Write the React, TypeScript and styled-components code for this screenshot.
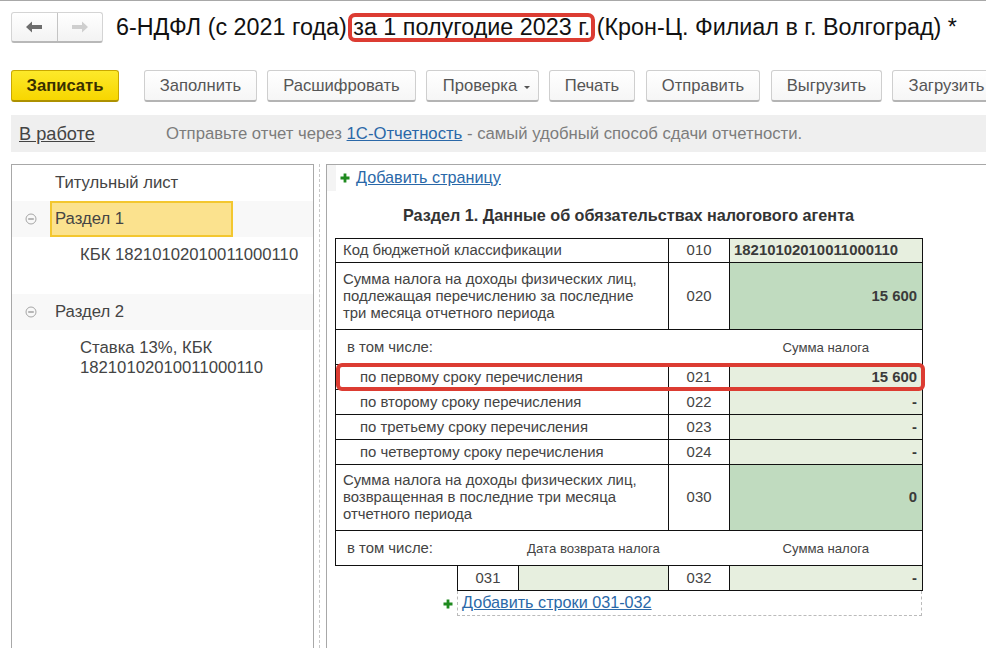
import styled, { createGlobalStyle } from 'styled-components';

const GlobalStyle = createGlobalStyle`
  html, body {
    margin: 0;
    padding: 0;
    background: #fff;
    font-family: "Liberation Sans", Arial, sans-serif;
    color: #333;
  }
`;

const Page = styled.div`
  width: 986px;
  height: 648px;
  overflow: hidden;
  border-top: 1px solid #a8a8a8;
  box-sizing: border-box;
  display: flex;
  flex-direction: column;
`;

const Header = styled.div`
  display: flex;
  align-items: center;
  height: 32px;
  margin-top: 10px;
  padding-left: 11px;
`;

const NavGroup = styled.div`
  display: flex;
  width: 92px;
  height: 31px;
  box-sizing: border-box;
  border: 1px solid #d4d4d4;
  border-bottom: 2px solid #b8b8b8;
  border-radius: 3px;
  background: linear-gradient(#fff, #f3f3f3);
  margin-right: 13px;
`;

const NavButton = styled.div<{ $split?: boolean }>`
  flex: 1;
  display: flex;
  align-items: center;
  justify-content: center;
  border-right: ${p => (p.$split ? '1px solid #c4c4c4' : 'none')};
`;

const Title = styled.h1`
  margin: 0;
  font-size: 23.33px;
  font-weight: 400;
  line-height: 30px;
  color: #111;
  white-space: nowrap;
`;

const Marked = styled.span`
  position: relative;

  &::after {
    content: '';
    position: absolute;
    left: -5px;
    right: -5px;
    top: -1px;
    bottom: -2px;
    border: 4px solid #dc3c32;
    border-radius: 7px;
  }
`;

const Toolbar = styled.div`
  display: flex;
  height: 32px;
  margin-top: 27px;
  padding-left: 11px;
  overflow: hidden;
`;

const Button = styled.div<{ $w: number; $gap: number; $primary?: boolean; $menu?: boolean }>`
  flex: 0 0 ${p => p.$w}px;
  height: 32px;
  box-sizing: border-box;
  margin-right: ${p => p.$gap}px;
  padding-left: ${p => (p.$menu ? '8px' : '0')};
  display: flex;
  align-items: center;
  justify-content: center;
  gap: 7px;
  border-radius: 3px;
  font-size: 16.6px;
  white-space: nowrap;
  border: 1px solid ${p => (p.$primary ? '#c9a800' : '#cfcfcf')};
  border-bottom: 2px solid ${p => (p.$primary ? '#ad9100' : '#b4b4b4')};
  background: ${p => (p.$primary ? 'linear-gradient(#fde92a, #f7d600)' : 'linear-gradient(#fff, #f6f6f6)')};
  color: ${p => (p.$primary ? '#3a3000' : '#555')};
  font-weight: ${p => (p.$primary ? 700 : 400)};
`;

const Caret = styled.span`
  width: 0;
  height: 0;
  margin-top: 3px;
  border-left: 3px solid transparent;
  border-right: 3px solid transparent;
  border-top: 3px solid #555;
`;

const InfoBar = styled.div`
  display: flex;
  align-items: center;
  height: 37px;
  box-sizing: border-box;
  margin: 13px 0 0 11px;
  padding: 1px 0 0 8px;
  background: #efefef;
  white-space: nowrap;
`;

const Status = styled.a`
  width: 147px;
  font-size: 18.2px;
  color: #444;
  text-decoration: underline;
`;

const Hint = styled.div`
  font-size: 16.7px;
  color: #7c7c7c;
`;

const Link = styled.a`
  color: #2a68a8;
  text-decoration: underline;
`;

const Body = styled.div`
  flex: 1;
  display: flex;
  margin: 12px 0 0 11px;
  min-height: 0;
`;

const Tree = styled.div`
  width: 303px;
  box-sizing: border-box;
  border: 1px solid #a8a8a8;
  border-bottom: none;
  font-size: 16.7px;
  color: #444;
`;

const TreeRow = styled.div<{ $group?: boolean; $h: number; $gap?: number }>`
  display: flex;
  align-items: center;
  height: ${p => p.$h}px;
  margin-bottom: ${p => p.$gap ?? 0}px;
  padding-left: 13px;
  background: ${p => (p.$group ? '#f8f8f8' : 'transparent')};
`;

const Toggle = styled.svg`
  flex: 0 0 12px;
  width: 12px;
  height: 12px;
`;

const TreeLabel = styled.div<{ $selected?: boolean }>`
  box-sizing: border-box;
  height: 36px;
  line-height: ${p => (p.$selected ? '32px' : '35px')};
  margin-left: ${p => (p.$selected ? '13px' : '18px')};
  width: ${p => (p.$selected ? '183px' : 'auto')};
  background: ${p => (p.$selected ? '#fbe28e' : 'transparent')};
  border: ${p => (p.$selected ? '2px solid #f3c72f' : 'none')};
  padding-left: ${p => (p.$selected ? '3px' : '0')};
`;

const TreePlain = styled.div<{ $indent: number }>`
  padding-left: ${p => p.$indent}px;
  line-height: 20px;
`;

const Splitter = styled.div`
  width: 0;
  margin: 0 6px 0 5px;
  border-left: 1px dashed #c8c8c8;
`;

const Form = styled.div`
  flex: 1;
  box-sizing: border-box;
  border: 1px solid #a8a8a8;
  border-right: none;
  border-bottom: none;
  padding-left: 8px;
  min-width: 0;
`;

const AddRow = styled.div`
  display: flex;
  align-items: center;
  height: 26px;
  font-size: 16.2px;
  margin-left: -8px;
`;

const Gutter = styled.div`
  width: 9px;
  height: 26px;
  margin-right: 4px;
  background: #f4f4f4;
`;

const PageLink = styled(Link)`
  margin: -2px 0 0 6px;
`;

const SectionTitle = styled.div`
  width: 587px;
  margin-top: 13px;
  text-align: center;
  font-size: 16.2px;
  font-weight: 700;
  line-height: 22px;
  color: #333;
`;

const TableWrap = styled.div`
  position: relative;
  width: 588px;
  margin-top: 12px;
`;

const Table = styled.table`
  border-collapse: collapse;
  table-layout: fixed;
  width: 587px;
  color: #444;
`;

const Row = styled.tr<{ $h: number }>`
  height: ${p => p.$h}px;
`;

const Cell = styled.td<{ $indent?: number; $open?: boolean; $none?: boolean; $right?: boolean; $tone?: 'light' | 'dark'; $bold?: boolean; $center?: boolean; $small?: boolean }>`
  box-sizing: border-box;
  padding: 0 ${p => (p.$right ? '5px' : '0')} 0 ${p => p.$indent ?? 0}px;
  border: ${p => (p.$none ? 'none' : '1px solid #111')};
  ${p => p.$open && 'border-left: none; border-right: none;'}
  background: ${p => (p.$tone === 'light' ? '#e7efdf' : p.$tone === 'dark' ? '#c0dbbf' : 'transparent')};
  text-align: ${p => (p.$right ? 'right' : p.$center ? 'center' : 'left')};
  font-weight: ${p => (p.$bold ? 700 : 400)};
  font-size: ${p => (p.$small ? '13.2px' : '14.9px')};
  line-height: 17px;
  white-space: nowrap;
  color: ${p => (p.$bold ? '#3a3a3a' : '#444')};
`;

const RowMark = styled.div`
  position: absolute;
  left: 1px;
  right: -2px;
  top: 125px;
  height: 28px;
  box-sizing: border-box;
  border: 4px solid #dc3c32;
  border-radius: 6px;
`;

const AddLines = styled.div`
  display: flex;
  align-items: center;
  width: 587px;
  height: 25px;
  font-size: 16.2px;
`;

const AddIcon = styled.span`
  flex: 0 0 122px;
  display: flex;
  justify-content: flex-end;
  padding-right: 4px;
  box-sizing: border-box;
`;

const AddBox = styled.div`
  flex: 1;
  height: 25px;
  line-height: 23px;
  box-sizing: border-box;
  padding-left: 4px;
  border-left: 1px dashed #bbb;
  border-right: 1px dashed #bbb;
  border-bottom: 1px dashed #bbb;
`;

const Arrow = ({ dir, color }: { dir: 'left' | 'right'; color: string }) => (
  <svg width="18" height="14" viewBox="0 0 18 14">
    <path
      d={dir === 'left' ? 'M1 7 L7 1.5 V5 H17 V9 H7 V12.5 Z' : 'M17 7 L11 1.5 V5 H1 V9 H11 V12.5 Z'}
      fill={color}
    />
  </svg>
);

const Plus = () => (
  <svg width="10" height="10" viewBox="0 0 10 10">
    <path d="M3.6 0.5 H6.4 V3.6 H9.5 V6.4 H6.4 V9.5 H3.6 V6.4 H0.5 V3.6 H3.6 Z" fill="#1f8a1f" />
  </svg>
);

const Collapse = () => (
  <Toggle viewBox="0 0 12 12">
    <circle cx="6" cy="6" r="5" fill="none" stroke="#a6a6a6" />
    <path d="M3.2 6 H8.8" stroke="#8c8c8c" strokeWidth="1.2" />
  </Toggle>
);

const buttons = [
  { label: 'Записать', w: 108, gap: 25, primary: true },
  { label: 'Заполнить', w: 113, gap: 10 },
  { label: 'Расшифровать', w: 149, gap: 10 },
  { label: 'Проверка', w: 113, gap: 10, caret: true },
  { label: 'Печать', w: 86, gap: 11 },
  { label: 'Отправить', w: 114, gap: 11 },
  { label: 'Выгрузить', w: 111, gap: 10 },
  { label: 'Загрузить', w: 109, gap: 0 },
];

const payments = [
  { label: 'по второму сроку перечисления', code: '022' },
  { label: 'по третьему сроку перечисления', code: '023' },
  { label: 'по четвертому сроку перечисления', code: '024' },
];

export default function App() {
  return (
    <Page>
      <GlobalStyle />
      <Header>
        <NavGroup>
          <NavButton $split>
            <Arrow dir="left" color="#6e6e6e" />
          </NavButton>
          <NavButton>
            <Arrow dir="right" color="#cfcfcf" />
          </NavButton>
        </NavGroup>
        <Title>
          6-НДФЛ (с 2021 года) <Marked>за 1 полугодие 2023 г.</Marked> (Крон-Ц. Филиал в г. Волгоград) *
        </Title>
      </Header>

      <Toolbar>
        {buttons.map(b => (
          <Button key={b.label} $w={b.w} $gap={b.gap} $primary={b.primary} $menu={b.caret}>
            {b.label}
            {b.caret && <Caret />}
          </Button>
        ))}
      </Toolbar>

      <InfoBar>
        <Status>В работе</Status>
        <Hint>
          Отправьте отчет через <Link>1С-Отчетность</Link> - самый удобный способ сдачи отчетности.
        </Hint>
      </InfoBar>

      <Body>
        <Tree>
          <TreeRow $h={36}>
            <TreePlain $indent={30}>Титульный лист</TreePlain>
          </TreeRow>
          <TreeRow $h={36} $group $gap={1}>
            <Collapse />
            <TreeLabel $selected>Раздел 1</TreeLabel>
          </TreeRow>
          <TreeRow $h={34} $gap={22}>
            <TreePlain $indent={55}>КБК 18210102010011000110</TreePlain>
          </TreeRow>
          <TreeRow $h={36} $group $gap={8}>
            <Collapse />
            <TreeLabel>Раздел 2</TreeLabel>
          </TreeRow>
          <TreeRow $h={40}>
            <TreePlain $indent={55}>
              Ставка 13%, КБК
              <br />
              18210102010011000110
            </TreePlain>
          </TreeRow>
        </Tree>

        <Splitter />

        <Form>
          <AddRow>
            <Gutter />
            <Plus />
            <PageLink>Добавить страницу</PageLink>
          </AddRow>
          <SectionTitle>Раздел 1. Данные об обязательствах налогового агента</SectionTitle>
          <TableWrap>
            <Table>
              <colgroup>
                <col style={{ width: 122 }} />
                <col style={{ width: 61 }} />
                <col style={{ width: 150 }} />
                <col style={{ width: 61 }} />
                <col style={{ width: 193 }} />
              </colgroup>
              <tbody>
                <Row $h={24}>
                  <Cell colSpan={3} $indent={7}>Код бюджетной классификации</Cell>
                  <Cell $center>010</Cell>
                  <Cell $tone="light" $bold $indent={4}>18210102010011000110</Cell>
                </Row>
                <Row $h={67}>
                  <Cell colSpan={3} $indent={7}>
                    Сумма налога на доходы физических лиц,
                    <br />
                    подлежащая перечислению за последние
                    <br />
                    три месяца отчетного периода
                  </Cell>
                  <Cell $center>020</Cell>
                  <Cell $tone="dark" $bold $right>15 600</Cell>
                </Row>
                <Row $h={35}>
                  <Cell colSpan={4} $indent={11} style={{ borderRight: 'none' }}>в том числе:</Cell>
                  <Cell $center $small style={{ borderLeft: 'none' }}>Сумма налога</Cell>
                </Row>
                <Row $h={25}>
                  <Cell colSpan={3} $indent={24}>по первому сроку перечисления</Cell>
                  <Cell $center>021</Cell>
                  <Cell $tone="light" $bold $right>15 600</Cell>
                </Row>
                {payments.map(p => (
                  <Row $h={25} key={p.code}>
                    <Cell colSpan={3} $indent={24}>{p.label}</Cell>
                    <Cell $center>{p.code}</Cell>
                    <Cell $tone="light" $bold $right>-</Cell>
                  </Row>
                ))}
                <Row $h={66}>
                  <Cell colSpan={3} $indent={7}>
                    Сумма налога на доходы физических лиц,
                    <br />
                    возвращенная в последние три месяца
                    <br />
                    отчетного периода
                  </Cell>
                  <Cell $center>030</Cell>
                  <Cell $tone="dark" $bold $right>0</Cell>
                </Row>
                <Row $h={35}>
                  <Cell colSpan={2} $indent={11} style={{ borderRight: 'none' }}>в том числе:</Cell>
                  <Cell colSpan={1} $center $small $open>Дата возврата налога</Cell>
                  <Cell $open />
                  <Cell $center $small style={{ borderLeft: 'none' }}>Сумма налога</Cell>
                </Row>
                <Row $h={25}>
                  <Cell $none />
                  <Cell $center>031</Cell>
                  <Cell $tone="light" />
                  <Cell $center>032</Cell>
                  <Cell $tone="light" $bold $right>-</Cell>
                </Row>
              </tbody>
            </Table>
            <RowMark />
            <AddLines>
              <AddIcon>
                <Plus />
              </AddIcon>
              <AddBox>
                <Link>Добавить строки 031-032</Link>
              </AddBox>
            </AddLines>
          </TableWrap>
        </Form>
      </Body>
    </Page>
  );
}
